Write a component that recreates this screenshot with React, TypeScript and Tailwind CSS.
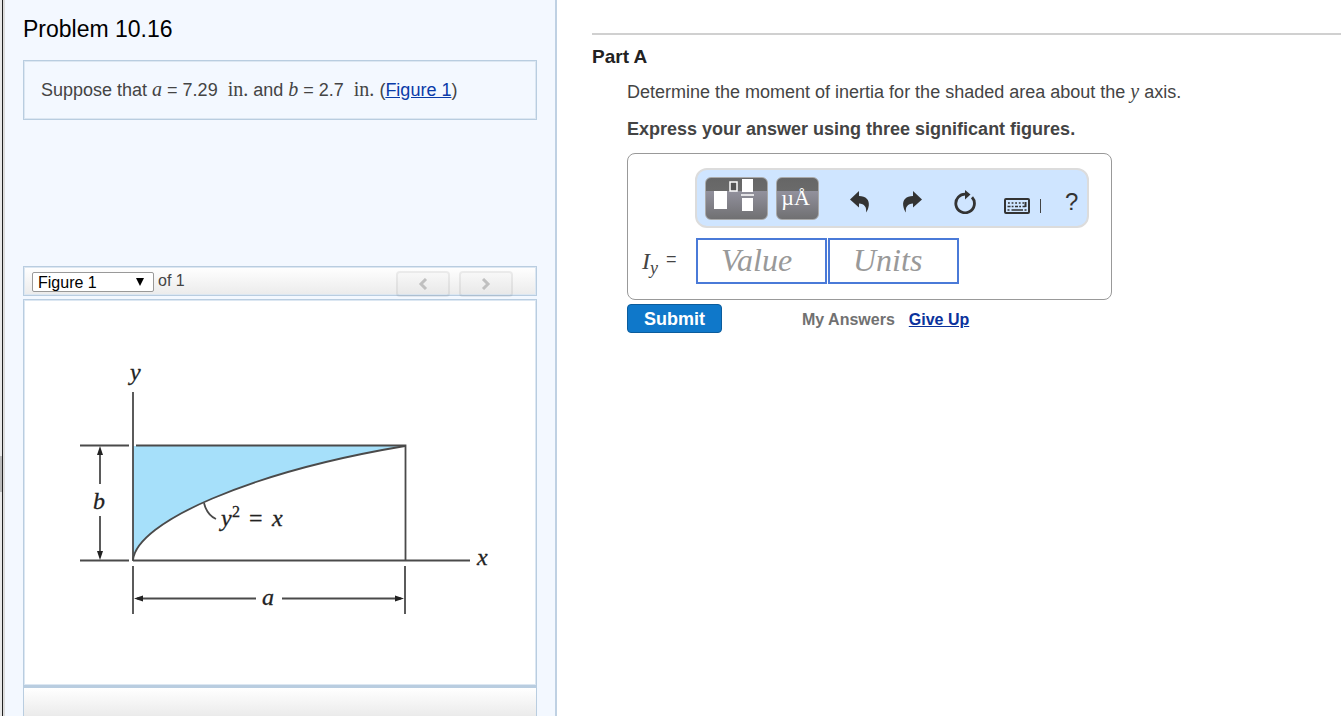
import React from 'react';

const serif = "font-['Liberation_Serif',serif]";

interface MathProps {
  children: React.ReactNode;
  upright?: boolean;
}

const MathText: React.FC<MathProps> = ({ children, upright }) => (
  <span className={`${serif} text-xl leading-5 ${upright ? '' : 'italic'}`}>{children}</span>
);

const Chevron = ({ flip }: { flip?: boolean }) => (
  <svg width="10" height="12" viewBox="0 0 10 12" fill="none" stroke="#c0c0c0" strokeWidth="3">
    <path d={flip ? 'M2 1l5 5-5 5' : 'M8 1L3 6l5 5'} />
  </svg>
);

const UndoIcon = () => (
  <svg width="20" height="22" viewBox="0 0 20 22" fill="#333">
    <path d="M0 8.500L9 0V5C16 5 19.500 9 18.800 14.500C18.400 17.500 17.500 19.500 16 21.500C16.800 16 14.500 13 9 12.500V16.500Z" />
  </svg>
);

const RedoIcon = () => (
  <svg width="20" height="22" viewBox="0 0 20 22" fill="#333">
    <path d="M20 8.500L11 0V5C4 5 .5 9 1.200 14.500C1.600 17.500 2.500 19.500 4 21.500C3.200 16 5.500 13 11 12.500V16.500Z" />
  </svg>
);

const ResetIcon = () => (
  <svg width="22" height="24" viewBox="0 0 22 24">
    <path d="M12 4.200A9.300 9.300 0 1 0 18 7.200" fill="none" stroke="#333" strokeWidth="2.800" />
    <path d="M11 0L16.500 4.500L11 9.500Z" fill="#333" />
  </svg>
);

const KeyboardIcon = () => (
  <svg width="26" height="16" viewBox="0 0 26 16" fill="none" stroke="#333">
    <rect x="1" y="1" width="24" height="14" rx="1" strokeWidth="2" />
    <path d="M4 5H20" strokeWidth="1.600" strokeDasharray="1.800 1.800" />
    <path d="M3.500 8.500H22" strokeWidth="1.600" strokeDasharray="3 1.200 1.800 1.500" />
    <path d="M21.500 4V9" strokeWidth="2" />
    <path d="M3.500 12H5.500M7.500 12H19M20.500 12H22.500" strokeWidth="1.500" />
  </svg>
);

const TemplatesIcon = () => (
  <svg width="61" height="41" viewBox="0 0 61 41">
    <rect x="8" y="13" width="13" height="18" fill="#fff" />
    <rect x="24" y="4" width="7" height="9" fill="#555" stroke="#fff" strokeWidth="1.500" />
    <rect x="36" y="1" width="11" height="13" fill="#fff" />
    <path d="M35 17H48" stroke="#fff" strokeWidth="1.500" />
    <rect x="36" y="20" width="11" height="13" fill="#fff" />
  </svg>
);

const FigureDrawing = () => (
  <svg viewBox="24 300 512 385" className="block w-full" role="img" aria-label="Area bounded by y squared equals x">
    <path d="M133 560C137 522 250 472 405 446H133Z" fill="#a6e0fa" />
    <g fill="none" stroke="#4a4a4a" strokeWidth="1.800">
      <path d="M133 560C137 522 250 472 405 446" />
      <path d="M133 392V561M80 445.500H129M136 445.500H405.500V560" />
      <path d="M80 560.500H129M133 560.500H470" />
      <path d="M133 566V614M405 566V614" />
      <path d="M100 450V484M100 516V556M137 598.500H256M282 598.500H401" />
      <path d="M204 503Q207 515 216 519" />
    </g>
    <g fill="#222">
      <path d="M100 446l3 9h-6ZM100 560l3-9h-6ZM134 598.500l9-3v6ZM404 598.500l-9-3v6Z" />
    </g>
    <g className={serif} fontStyle="italic" fontSize="24" fill="#222" stroke="#222" strokeWidth="0.300">
      <text x="130" y="380">y</text>
      <text x="93" y="509">b</text>
      <text x="262" y="605">a</text>
      <text x="477" y="565">x</text>
      <text x="221" y="526">y</text>
      <text x="232" y="517" fontSize="16" fontStyle="normal">2</text>
      <text x="249" y="526" fontStyle="normal">=</text>
      <text x="272" y="526">x</text>
    </g>
  </svg>
);

const boxBorder = 'border border-[#b9cde0] shadow-[inset_0_0_0_1px_#dce7f2]';
const barFill = 'bg-linear-to-b from-white to-[#ebebeb]';
const toolButton =
  'h-[43px] rounded-md border border-[#aaa] bg-[linear-gradient(#666_0,#6a6a6a_13px,#92919d_13px,#707072_100%)] text-white';
const navButton =
  'flex h-[26px] w-[54px] items-center justify-center rounded-sm border-2 border-black/6 bg-black/1';
const answerField = `${serif} h-[46px] w-[131px] border-2 border-[#4a7ad8] bg-white pl-[23px] text-[32px] italic outline-none placeholder:text-[#999] placeholder:opacity-100`;

const ProblemPanel = () => (
  <section className="flex flex-col border-r-2 border-[#bfd1e3] bg-[#f3f8ff] px-[18px] pt-[13px]">
    <h1 className="text-[23px] leading-8 text-black">Problem 10.16</h1>

    <div className={`mt-[15px] flex h-[60px] items-center px-[17px] ${boxBorder}`}>
      <p className="whitespace-pre">
        Suppose that <MathText>a</MathText> = 7.29 <MathText upright> in.</MathText> and <MathText>b</MathText> = 2.7 <MathText upright> in.</MathText> (<a href="#figure" className="text-[#0a3ba8] underline">Figure 1</a>)
      </p>
    </div>

    <div className={`mt-[146px] flex h-[30px] items-start pt-1 pr-[23px] pl-2 text-base leading-5 ${boxBorder} ${barFill}`}>
      <div className="relative mt-px">
        <select aria-label="Figure" className="block h-5 w-[122px] appearance-none rounded-xs border border-[#999] bg-white pl-[5px] text-black">
          <option>Figure 1</option>
        </select>
        <svg className="pointer-events-none absolute top-[6px] right-[10px]" width="8" height="8" viewBox="0 0 8 8">
          <path d="M0 0H8L4 8Z" />
        </svg>
      </div>
      <span className="ml-1">of 1</span>
      <div className="ml-auto flex gap-[9px]">
        <button type="button" aria-label="Previous figure" className={navButton}>
          <Chevron />
        </button>
        <button type="button" aria-label="Next figure" className={navButton}>
          <Chevron flip />
        </button>
      </div>
    </div>

    <div id="figure" className={`mt-[3px] bg-white ${boxBorder}`}>
      <FigureDrawing />
    </div>
    <div className={`min-h-7 flex-1 border-x border-t-2 border-[#b9cde0] ${barFill}`} />
  </section>
);

const Toolbar = () => (
  <div className="flex h-[60px] items-center rounded-xl border-2 border-[#dcdcdc] bg-[#cfe5ff] px-2 text-[#333]">
    <button type="button" aria-label="Templates" className={`w-[63px] ${toolButton}`}>
      <TemplatesIcon />
    </button>
    <button type="button" aria-label="Symbols" className={`ml-2 w-[43px] pr-1 text-[22px] leading-9 ${serif} ${toolButton}`}>
      µÅ
    </button>
    <div className="ml-[31px] flex items-center gap-8 pt-2">
      <button type="button" aria-label="Undo"><UndoIcon /></button>
      <button type="button" aria-label="Redo"><RedoIcon /></button>
      <button type="button" aria-label="Reset"><ResetIcon /></button>
    </div>
    <button type="button" aria-label="Keyboard shortcuts" className="ml-7 pt-4"><KeyboardIcon /></button>
    <span className="mt-4 ml-[10px] h-[14px] w-px bg-[#444]" />
    <button type="button" aria-label="Help" className="ml-6 pt-2 text-2xl leading-6">?</button>
  </div>
);

const AnswerPanel = () => (
  <section className="pt-[33px] pl-[35px]">
    <div className="border-t-2 border-[#d0d0d0] pt-[10px]">
      <h2 className="text-[19px] leading-6 font-bold text-[#222]">Part A</h2>
    </div>
    <div className="pt-[11px] pl-[35px]">
      <p className="leading-6">
        Determine the moment of inertia for the shaded area about the <MathText>y</MathText> axis.
      </p>
      <p className="mt-[13px] leading-6 font-bold">Express your answer using three significant figures.</p>

      <div className="mt-3 flex h-[147px] w-[485px] flex-col rounded-lg border border-[#999] pt-[14px] pr-[22px] pl-[14px]">
        <div className="ml-[53px]">
          <Toolbar />
        </div>
        <div className="mt-[10px] flex items-center">
          <label htmlFor="value" className="flex w-[54px] items-center">
            <span className={`${serif} text-2xl italic`}>I<sub className="text-lg">y</sub></span>
            <span className="mb-1 ml-2">=</span>
          </label>
          <input id="value" placeholder="Value" className={answerField} />
          <input aria-label="Units" placeholder="Units" className={`ml-px ${answerField}`} />
        </div>
      </div>

      <div className="mt-1 flex items-center text-base">
        <button type="button" className="h-[29px] w-[95px] rounded-sm border border-[#0b5c9c] bg-[#0f78ca] pt-px text-lg leading-6 font-bold text-white">
          Submit
        </button>
        <span className="mt-[2px] ml-20 font-bold text-[#717171]">My Answers</span>
        <a href="#give-up" className="mt-[2px] ml-[14px] font-bold text-[#0a329c] underline">Give Up</a>
      </div>
    </div>
  </section>
);

export default function App() {
  return (
    <main className="grid min-h-screen grid-cols-[5px_552fr_784fr] bg-white font-['Liberation_Sans',Arial,sans-serif] text-lg text-[#444]">
      <div className="flex items-center border-r-2 border-[#ddd] bg-[#222]">
        <div className="flex h-full w-[2px] flex-col justify-center bg-[#e8e8e8] pt-[231px]">
          <div className="h-9 bg-[#bbb]" />
        </div>
      </div>
      <ProblemPanel />
      <AnswerPanel />
    </main>
  );
}
